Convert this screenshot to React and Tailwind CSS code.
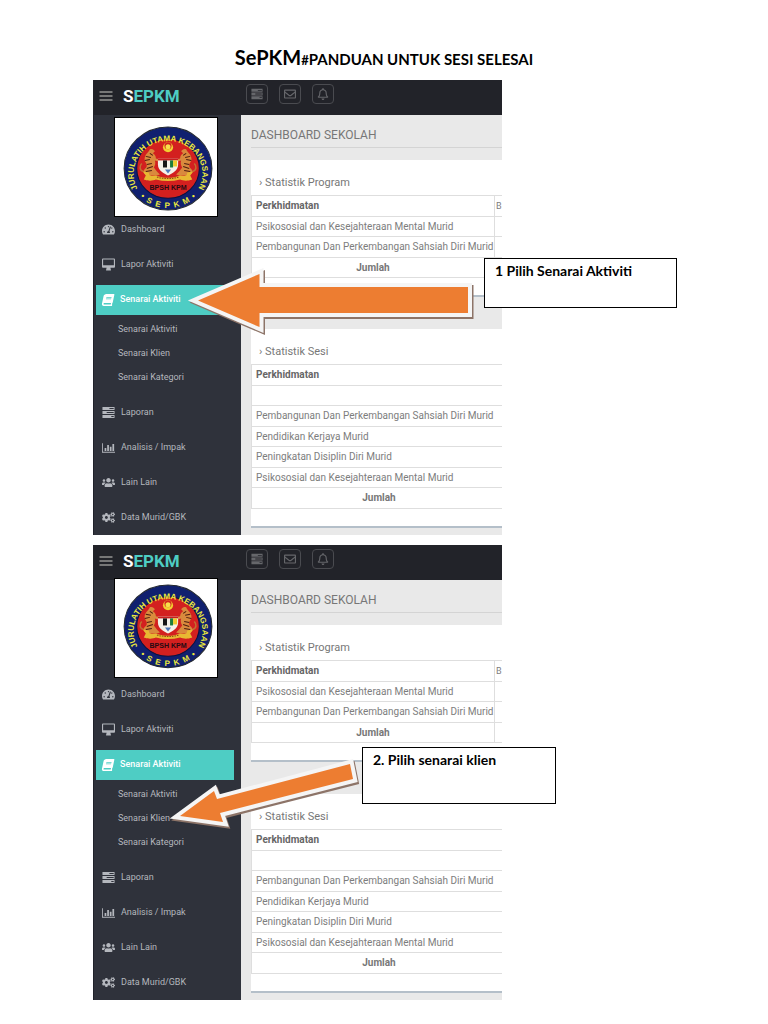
import React from "react";
import { FaBook, FaCogs, FaTachometerAlt, FaUsers, FaRegBell, FaRegEnvelope } from "react-icons/fa";

const BarsIcon = ({ className }) => (
  <svg className={className} viewBox="0 0 14 14" fill="currentColor" aria-hidden="true">
    <path d="M.5 2h13v2H.5zM.5 6h13v2H.5zM.5 10h13v2H.5z" />
  </svg>
);

const TasksIcon = ({ className }) => (
  <svg className={className} viewBox="0 0 14 12" fill="currentColor" aria-hidden="true">
    <path fillRule="evenodd" d="M.5 0h13v3.4H.5zM8 1.2v1h4.6v-1zM.5 4.3h13v3.4H.5zM5 5.5v1h7.600v-1zM.5 8.600h13V12H.5zM10 9.800v1h2.600v-1z" />
  </svg>
);

const DesktopIcon = ({ className }) => (
  <svg className={className} viewBox="0 0 14 13" fill="currentColor" aria-hidden="true">
    <path fillRule="evenodd" d="M1 0h12a1 1 0 0 1 1 1v8a1 1 0 0 1-1 1H9l.6 2.200v.8H4.400v-.8L5 10H1a1 1 0 0 1-1-1V1a1 1 0 0 1 1-1zm.2 1.100v6.200h11.600V1.100z" />
  </svg>
);

const ChartIcon = ({ className }) => (
  <svg className={className} viewBox="0 0 15 12" fill="currentColor" aria-hidden="true">
    <path d="M0 1h1v10h14v1H0zM3 6.500h2V10H3zM6 3h2v7H6zM9 5h2v5H9zM12 2h2v8h-2z" />
  </svg>
);

const mainLinks = [
  { label: "Dashboard", Icon: FaTachometerAlt },
  { label: "Lapor Aktiviti", Icon: DesktopIcon },
];

const subLinks = ["Senarai Aktiviti", "Senarai Klien", "Senarai Kategori"];

const moreLinks = [
  { label: "Laporan", Icon: TasksIcon },
  { label: "Analisis / Impak", Icon: ChartIcon },
  { label: "Lain Lain", Icon: FaUsers },
  { label: "Data Murid/GBK", Icon: FaCogs },
];

const Tiger = () => (
  <g>
    <path d="M-9 13c-4 1-8-1-8-4s3-3 3-6-3-4-2-8 4-5 5-8c2-1 4 0 5 2l-2 2c2 1 3 3 3 5l4 1-1 2-4-1c1 3 0 5-1 7l3 4 3 3-3 1z" fill="#d98a3d" />
    <path d="M-15-6l5 1M-16-2l5-1M-14 2l5-1M-14 6l6-2M-15 9l6-1M-11-9l3 2" stroke="#4b1c10" strokeWidth="1" fill="none" />
    <path d="M-17 9c-5-1-4-6-2-8" stroke="#c06f31" strokeWidth="1.500" fill="none" />
  </g>
);

const Crest = ({ id, cy }) => (
  <svg className="block w-full" viewBox="0 0 101 97" role="img" aria-label="SEPKM">
    <defs>
      <path id={`${id}-top`} d={`M22.500 ${cy + 20}A34 32 0 1 1 82.500 ${cy + 20}`} />
      <path id={`${id}-bottom`} d={`M14 ${cy + 10}A39.500 37.500 0 0 0 91 ${cy + 10}`} />
    </defs>
    <ellipse cx="52.500" cy={cy} rx="43.500" ry="41" fill="#10206f" stroke="#23282f" strokeWidth="1" />
    <ellipse cx="52.500" cy={cy} rx="31" ry="29.500" fill="#d3201f" stroke="#0b123f" strokeWidth="1" />
    <g fill="#ece93c" fontFamily="Liberation Sans, sans-serif" fontWeight="700">
      <text fontSize="8">
        <textPath href={`#${id}-top`} startOffset="50%" textAnchor="middle">JURULATIH UTAMA KEBANGSAAN</textPath>
      </text>
      <text fontSize="8" xmlSpace="preserve">
        <textPath href={`#${id}-bottom`} startOffset="50%" textAnchor="middle">{"•\u00a0\u00a0S\u00a0\u00a0E\u00a0\u00a0P\u00a0\u00a0K\u00a0\u00a0M\u00a0\u00a0•"}</textPath>
      </text>
    </g>
    <g transform={`translate(52.500 ${cy - 3})`}>
      <circle cx="0" cy="-18" r="5" fill="#f2cf31" />
      <circle cx="0" cy="-19.500" r="3.500" fill="#d3201f" />
      <circle cx="0" cy="-18.500" r="2.500" fill="#f6e04a" />
      <g transform="translate(-7 -3)"><Tiger /></g>
      <g transform="translate(7 -3) scale(-1 1)"><Tiger /></g>
      <path d="M-10-7H10V-1C10 5 4 8 0 10C-4 8-10 5-10-1z" fill="#f4f1e8" />
      <path d="M-10-7H10v2H-10z" fill="#c81e1e" />
      <path d="M-5-5h4v7h-4z" fill="#161616" />
      <path d="M2-5h3v7H2z" fill="#1d7d3c" />
      <path d="M5-5h4v6H5z" fill="#efcb2e" />
      <path d="M-3 4h6l-3 4z" fill="#4f79b8" />
      <path d="M-25 6l6 1c0 5 4 3 7 3 8 3 16 3 24 0 3 0 7 2 7-3l6-1-3 4 2 4c-6 2-9 1-12 0-8 2-16 2-24 0-3 1-6 2-12 0l2-4z" fill="#e8b832" />
      <path d="M-11 11.500q11 3 22 0" stroke="#8b4d12" strokeWidth="1" fill="none" strokeDasharray="1.500 1" />
    </g>
    <text x="52.500" y={cy + 21} textAnchor="middle" fontSize="7" fontWeight="700" fill="#250a13" fontFamily="Liberation Sans, sans-serif">BPSH KPM</text>
  </svg>
);

const NavItem = ({ label, Icon }) => (
  <li>
    <a href="#" className="flex h-[35px] items-center gap-1.5 pl-2 text-[#b4b7bd]">
      <Icon className="h-[13px] w-[13px] shrink-0" />
      {label}
    </a>
  </li>
);

const Sidebar = ({ id, raised }) => (
  <aside className="w-[148px] shrink-0 border-l border-[#20222b] bg-[#2f323b]">
    <div className={`h-[97px] pl-5 ${raised ? "" : "pt-0.5"}`}>
      <div className={`relative w-[104px] border border-black bg-white ${raised ? "-mt-0.5" : ""}`}>
        <Crest id={id} cy={raised ? 47 : 50} />
      </div>
    </div>
    <ul className={`text-[9px] ${raised ? "pt-0.5" : ""}`}>
      {mainLinks.map((link) => (
        <NavItem key={link.label} {...link} />
      ))}
      <li className="mt-[3px] mb-[5px]">
        <a href="#" className="mr-[7px] ml-0.5 flex h-[30px] items-center gap-1.5 bg-[#4ecdc4] pl-1.5 font-medium text-white">
          <FaBook className="h-3 w-3 shrink-0 -skew-x-12" />
          Senarai Aktiviti
        </a>
        <ul className="mt-[3px]">
          {subLinks.map((label) => (
            <li key={label}>
              <a href="#" className="flex h-6 items-center pl-6 text-[#b4b7bd]">{label}</a>
            </li>
          ))}
        </ul>
      </li>
      {moreLinks.map((link) => (
        <NavItem key={link.label} {...link} />
      ))}
    </ul>
  </aside>
);

const cellClass = "border border-[#dedede] px-1 py-0 leading-4 whitespace-nowrap";

const StatCard = ({ title, rows, wide }) => (
  <section className="overflow-hidden border-b-2 border-[#b4bfc9] bg-white">
    <h3 className="flex h-[35px] items-end pb-1 pl-2 text-[11px] text-[#777]">&rsaquo; {title}</h3>
    <table className="w-[320px] table-fixed border-collapse text-[10px] text-[#7d7d7d]">
      <thead>
        <tr className="h-[21px]">
          <th className={`${cellClass} text-left font-bold text-[#666] ${wide ? "w-[255px]" : "w-[243px]"}`}>Perkhidmatan</th>
          <th className="border border-[#dedede] px-px text-left text-[9px] leading-4 font-normal">{wide ? "" : "B"}</th>
        </tr>
      </thead>
      <tbody className="[&>tr:nth-child(even)]:h-[21px] [&>tr:nth-child(odd)]:h-5">
        {rows.map((row, i) => (
          <tr key={i}>
            <td className={cellClass}>{row}</td>
            <td className={cellClass}></td>
          </tr>
        ))}
        <tr>
          <td className={`${cellClass} text-center font-bold text-[#777]`}>Jumlah</td>
          <td className={cellClass}></td>
        </tr>
      </tbody>
    </table>
    <div className="h-[17px]" />
  </section>
);

const headerButtons = [
  { label: "Tugasan", Icon: TasksIcon },
  { label: "Mesej", Icon: FaRegEnvelope },
  { label: "Notifikasi", Icon: FaRegBell },
];

const Dashboard = ({ id, raised }) => (
  <div className="w-full max-w-[409px] overflow-hidden bg-[#e9e9e9] font-[Roboto,sans-serif]">
    <header className="flex h-[35px] bg-[#222329]">
      <div className="flex w-[153px] items-center gap-2.5 pb-1 pl-1.5">
        <button aria-label="Menu" className="text-[#777]"><BarsIcon className="h-3.5 w-3.5" /></button>
        <span className="text-[17px] leading-6 font-bold text-white">S<span className="text-[#4ecdc4]">EPKM</span></span>
      </div>
      <div className="flex gap-[11px] pt-1">
        {headerButtons.map(({ label, Icon }) => (
          <button key={label} aria-label={label} className="flex h-5 w-[22px] items-center justify-center rounded-sm border border-[#4a4b50] text-[#66676b]">
            <Icon className="h-3 w-3" />
          </button>
        ))}
      </div>
    </header>
    <div className="flex">
      <Sidebar id={id} raised={raised} />
      <main className="min-w-0 flex-1 pl-2.5">
        <h2 className="flex h-[33px] items-end border-b border-[#d4d4d4] pb-1 text-xs text-[#777]">DASHBOARD SEKOLAH</h2>
        <div className="mt-3 flex flex-col gap-8">
          <StatCard
            title="Statistik Program"
            rows={["Psikososial dan Kesejahteraan Mental Murid", "Pembangunan Dan Perkembangan Sahsiah Diri Murid"]}
          />
          <StatCard
            wide
            title="Statistik Sesi"
            rows={[
              "",
              "Pembangunan Dan Perkembangan Sahsiah Diri Murid",
              "Pendidikan Kerjaya Murid",
              "Peningkatan Disiplin Diri Murid",
              "Psikososial dan Kesejahteraan Mental Murid",
            ]}
          />
        </div>
      </main>
    </div>
  </div>
);

// Block arrow with a white outline and a thin brown shadow
const Arrow = ({ points, className, viewBox }) => (
  <svg className={className} viewBox={viewBox} aria-hidden="true">
    <polygon points={points} transform="translate(1.500 2)" fill="#8d7468" stroke="#8d7468" strokeWidth="8" strokeMiterlimit="10" />
    <polygon points={points} fill="#f5f5f5" stroke="#f5f5f5" strokeWidth="8" strokeMiterlimit="10" />
    <polygon points={points} fill="#ed7d31" />
  </svg>
);

const App = () => {
  return (
    <div className="min-h-screen bg-white pt-[43px] pb-6 font-[Lato,sans-serif] text-black">
      <h1 className="flex h-[37px] items-baseline justify-center text-[15px] leading-7 font-bold">
        <span className="text-xl leading-7">SePKM</span>
        <span className="text-[13px]">#</span>PANDUAN UNTUK SESI SELESAI
      </h1>
      <div className="flex flex-col gap-2.5 pl-[93px]">
        <div className="relative">
          <Dashboard id="crest-1" />
          <Arrow
            className="absolute top-[180px] left-[87px] h-[85px] w-[300px]"
            viewBox="0 0 300 85"
            points="18,40.500 79.500,14 79.500,27 288,27 288,53 79.500,53 79.500,67"
          />
          <p className="absolute top-[178px] left-[391px] h-[50px] w-[193px] border border-black bg-white px-2.5 py-0.5 text-sm leading-5 font-bold">
            1 Pilih Senarai Aktiviti
          </p>
        </div>
        <div className="relative">
          <Dashboard id="crest-2" raised />
          <Arrow
            className="absolute top-[205px] left-[67px] h-[85px] w-[210px]"
            viewBox="0 0 210 85"
            points="20,66 54,41 57,49 190,14 193,29 60,63 63,72"
          />
          <p className="absolute top-[202px] left-[269px] h-[57px] w-[194px] border border-black bg-white px-2.5 py-0.5 text-sm leading-5 font-bold">
            2. Pilih senarai klien
          </p>
        </div>
      </div>
    </div>
  );
};

export default App;
